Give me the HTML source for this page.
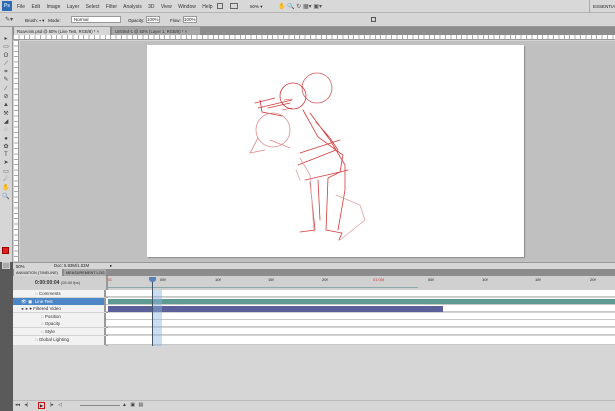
<!DOCTYPE html>
<html><head><style>
*{margin:0;padding:0;box-sizing:border-box;white-space:nowrap}
body{width:615px;height:411px;overflow:hidden;background:#d4d4d4;font-family:"Liberation Sans",sans-serif;font-size:5px;color:#222;position:relative}
.a{position:absolute;overflow:hidden}
.row{position:absolute;left:13px;width:602px;height:7px;border-bottom:1px solid #c8c8c8;background:#fff}
.row .l{position:absolute;left:0;width:93px;height:7px;background:#f2f2f2;border-right:2px solid #999}
.row span{position:absolute;top:1px;font-size:4.5px;color:#333}
</style></head><body>
<div class="a" style="left:0;top:0;width:615px;height:13px;background:#d8d8d8;border-bottom:1px solid #b5b5b5"></div>
<div class="a" style="left:2px;top:1px;width:10px;height:10px;background:#2f6bb3;color:#cde;font-size:5px;font-weight:bold;text-align:center;line-height:10px">Ps</div>
<div class="a" style="left:17px;top:4px;font-size:5px;color:#333;word-spacing:5px">File Edit Image Layer Select Filter Analysis 3D View Window Help</div>
<div class="a" style="left:217px;top:3px;width:6px;height:6px;border:1px solid #666"></div>
<div class="a" style="left:230px;top:3px;width:8px;height:6px;border:1px solid #666"></div>
<div class="a" style="left:250px;top:4px;font-size:4.5px">50% ▾</div>
<div class="a" style="left:278px;top:3px;font-size:6px;color:#555">✋ 🔍 ↻ ▦▾ ▣▾</div>
<div class="a" style="left:589px;top:0;width:1px;height:13px;background:#aaa"></div>
<div class="a" style="left:593px;top:4px;font-size:4.5px">ESSENTIALS</div>
<div class="a" style="left:0;top:13px;width:615px;height:14px;background:#d6d6d6;border-bottom:1px solid #999"></div>
<div class="a" style="left:5px;top:16px;font-size:6px;color:#444">✎▾</div>
<div class="a" style="left:25px;top:18px;font-size:4.5px">Brush: ▪ ▾ &nbsp;&nbsp;Mode:</div>
<div class="a" style="left:71px;top:16px;width:50px;height:7px;background:#fff;border:1px solid #999;font-size:4.5px;padding-left:2px">Normal</div>
<div class="a" style="left:128px;top:18px;font-size:4.5px">Opacity:</div>
<div class="a" style="left:146px;top:16px;width:14px;height:7px;background:#fff;border:1px solid #999;font-size:4.5px">100%</div>
<div class="a" style="left:170px;top:18px;font-size:4.5px">Flow:</div>
<div class="a" style="left:183px;top:16px;width:14px;height:7px;background:#fff;border:1px solid #999;font-size:4.5px">100%</div>
<div class="a" style="left:371px;top:17px;width:5px;height:5px;border:1px solid #555"></div>
<div class="a" style="left:13px;top:27px;width:602px;height:8px;background:#8c8c8c"></div>
<div class="a" style="left:14px;top:27px;width:96px;height:8px;background:#d6d6d6;font-size:4.2px;padding:2px 3px">RoaAnim.psd @ 50% (Line Test, RGB/8) * ×</div>
<div class="a" style="left:112px;top:27px;width:88px;height:8px;background:#a6a6a6;font-size:4.2px;padding:2px 3px;color:#333">Untitled-1 @ 50% (Layer 1, RGB/8) * ×</div>
<div class="a" style="left:13px;top:35px;width:602px;height:5px;background:#fff;border-bottom:1px solid #999;background-image:repeating-linear-gradient(90deg,#aaa 0 1px,transparent 1px 5.4px)"></div>
<div class="a" style="left:0;top:27px;width:13px;height:235px;background:#d6d6d6;border-right:1px solid #999;font-size:6px;line-height:8.3px;color:#444;text-align:center;padding-top:8px;white-space:normal">▸<br>▭<br>ʘ<br>⟋<br>⌗<br>✎<br>∕<br>⊘<br>▲<br>⚒<br>◢<br>◌<br>●<br>✿<br>T<br>➤<br>▭<br>☄<br>✋<br>🔍</div>
<div class="a" style="left:2px;top:247px;width:7px;height:7px;background:#e02222;border:1px solid #900"></div>
<div class="a" style="left:0;top:262px;width:13px;height:149px;background:#5a5a5a"></div>
<div class="a" style="left:2px;top:262px;width:8px;height:7px;border:1px solid #ccc;background:#aaa"></div>
<div class="a" style="left:14px;top:40px;width:5px;height:222px;background:#fff;border-right:1px solid #999;background-image:repeating-linear-gradient(180deg,#aaa 0 1px,transparent 1px 5.4px)"></div>
<div class="a" style="left:20px;top:41px;width:595px;height:221px;background:#c0c0c0"></div>
<div class="a" style="left:147px;top:45px;width:377px;height:212px;background:#fff;box-shadow:1px 1px 1px #888"></div>
<svg class="a" style="left:0;top:0" width="615" height="270" fill="none" stroke="#d23a3a" stroke-width="0.8" stroke-linecap="round">
<circle cx="317" cy="88" r="15" stroke="#cf5a5a"/>
<circle cx="293" cy="96" r="13"/>
<path d="M268 108 L290 103 M258 108 L292 100 M255 103 L275 98 M260 100 L262 112 L282 116"/>
<path d="M284 100 L292 99 M282 110 L292 108" stroke-width="0.6"/>
<circle cx="273" cy="130" r="17" stroke="#dd8a8a"/>
<path d="M258 138 L250 153 L265 150 M270 140 L290 148" stroke="#dd8a8a"/>
<path d="M303 110 L318 137 L343 155 L340 172 L328 178 L326 230 L342 233 L339 240 M310 113 L330 140 L345 165 L345 190 L338 230 M316 122 L330 138 L338 150 M300 153 L340 140 M298 165 L336 150 M305 180 L340 172 L348 170 M310 182 L315 230 L300 232 M318 180 L320 220" />
<path d="M300 158 L310 175 L314 232 M336 195 L360 205 L365 220 L340 240 M296 170 L300 180" stroke="#e0a0a0"/>
</svg>
<div class="a" style="left:13px;top:262px;width:602px;height:7px;background:#d6d6d6;border-top:1px solid #999;font-size:4.3px;padding:1px 3px">50%</div>
<div class="a" style="left:54px;top:263px;font-size:4.3px">Doc: 5.93M/1.02M</div>
<div class="a" style="left:110px;top:263px;font-size:4.3px">▸</div>
<div class="a" style="left:13px;top:269px;width:602px;height:7px;background:#8c8c8c"></div>
<div class="a" style="left:14px;top:269px;width:48px;height:7px;background:#d6d6d6;font-size:3.8px;padding:1.5px 2px">ANIMATION (TIMELINE)</div>
<div class="a" style="left:64px;top:269px;width:42px;height:7px;background:#a6a6a6;font-size:3.8px;padding:1.5px 2px">MEASUREMENT LOG</div>
<div class="a" style="left:13px;top:276px;width:602px;height:14px;background:#d0d0d0"></div>
<div class="a" style="left:35px;top:280px;font-size:5px;font-weight:bold;color:#333">0:00:00:04 <span style="font-weight:normal;font-size:4px">(25.00 fps)</span></div>
<div class="a" style="left:106px;top:276px;width:2px;height:70px;background:#999"></div>
<div class="a" style="left:108px;top:287px;width:310px;height:1px;background:#8aa"></div>
<div class="a" style="left:108px;top:277px;font-size:4px;color:#c33">00</div>
<div class="a" style="left:160px;top:277px;font-size:4px">05f</div>
<div class="a" style="left:215px;top:277px;font-size:4px">10f</div>
<div class="a" style="left:268px;top:277px;font-size:4px">15f</div>
<div class="a" style="left:322px;top:277px;font-size:4px">20f</div>
<div class="a" style="left:373px;top:277px;font-size:4px;color:#c33">01:00f</div>
<div class="a" style="left:428px;top:277px;font-size:4px">05f</div>
<div class="a" style="left:482px;top:277px;font-size:4px">10f</div>
<div class="a" style="left:535px;top:277px;font-size:4px">15f</div>
<div class="a" style="left:590px;top:277px;font-size:4px">20f</div>
<div class="row" style="top:290px"><div class="l"><span style="left:22px">◌ Comments</span></div></div>
<div class="row" style="top:298px"><div class="l" style="background:#4d86c6"><span style="left:8px;color:#fff">👁 ▣ &nbsp;Line Test</span></div></div>
<div class="a" style="left:108px;top:299px;width:507px;height:5px;background:#5f9a92"></div>
<div class="row" style="top:305px"><div class="l"><span style="left:8px">◂ &nbsp;▸ ● Filtered Video</span></div></div>
<div class="a" style="left:108px;top:306px;width:335px;height:6px;background:#5b5f9a"></div>
<div class="row" style="top:313px"><div class="l"><span style="left:28px">◌ Position</span></div></div>
<div class="row" style="top:320px"><div class="l"><span style="left:28px">◌ Opacity</span></div></div>
<div class="row" style="top:328px"><div class="l"><span style="left:28px">◌ Style</span></div></div>
<div class="row" style="top:336px;height:9px"><div class="l" style="height:9px"><span style="left:22px">◌ Global Lighting</span></div></div>
<div class="a" style="left:152px;top:290px;width:10px;height:56px;background:rgba(140,180,225,0.45)"></div>
<div class="a" style="left:152px;top:278px;width:1px;height:68px;background:#456"></div>
<div class="a" style="left:149px;top:277px;width:7px;height:5px;background:#5b82b6;border-radius:0 0 3px 3px"></div>
<div class="a" style="left:13px;top:346px;width:602px;height:54px;background:#d6d6d6"></div>
<div class="a" style="left:13px;top:400px;width:602px;height:11px;background:#d6d6d6;border-top:1px solid #bbb"></div>
<div class="a" style="left:15px;top:402px;font-size:5px;color:#444;word-spacing:3px">◂◂ ◂|</div>
<div class="a" style="left:38px;top:402px;width:7px;height:7px;border:1px solid #d01010;font-size:4px;text-align:center;line-height:5px">▶</div>
<div class="a" style="left:50px;top:402px;font-size:5px;color:#444;word-spacing:3px">|▸ ◁</div>
<div class="a" style="left:80px;top:405px;width:40px;height:1px;background:#888"></div>
<div class="a" style="left:122px;top:402px;font-size:5px;color:#444;word-spacing:2px">▲ ▣ ▤</div>
</body></html>
